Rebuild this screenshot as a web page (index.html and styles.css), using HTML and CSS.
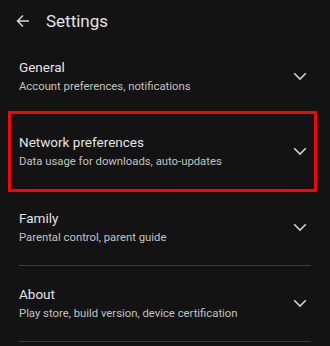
FILE: index.html
```html
<!DOCTYPE html>
<html>
<head>
<meta charset="utf-8">
<link rel="stylesheet" href="styles.css">
</head>
<body>
<div class="screen">
  <header class="topbar">
    <svg class="back" width="14" height="14" viewBox="0 0 14 14"><path d="M13 7H2M7 1.5L1.5 7L7 12.5" fill="none" stroke="#d6d6d6" stroke-width="1.5"/></svg>
    <span class="title">Settings</span>
  </header>
  <div class="list">
    <div class="item">
      <div class="text"><div class="name">General</div><div class="desc">Account preferences, notifications</div></div>
      <svg class="chev" width="14" height="9" viewBox="0 0 14 9"><path d="M1.2 1.2L7 7L12.8 1.2" fill="none" stroke="#cfcfcf" stroke-width="1.6"/></svg>
    </div>
    <div class="item highlight">
      <div class="text"><div class="name">Network preferences</div><div class="desc">Data usage for downloads, auto-updates</div></div>
      <svg class="chev" width="14" height="9" viewBox="0 0 14 9"><path d="M1.2 1.2L7 7L12.8 1.2" fill="none" stroke="#cfcfcf" stroke-width="1.6"/></svg>
    </div>
    <div class="item">
      <div class="text"><div class="name">Family</div><div class="desc">Parental control, parent guide</div></div>
      <svg class="chev" width="14" height="9" viewBox="0 0 14 9"><path d="M1.2 1.2L7 7L12.8 1.2" fill="none" stroke="#cfcfcf" stroke-width="1.6"/></svg>
    </div>
    <div class="item">
      <div class="text"><div class="name">About</div><div class="desc">Play store, build version, device certification</div></div>
      <svg class="chev" width="14" height="9" viewBox="0 0 14 9"><path d="M1.2 1.2L7 7L12.8 1.2" fill="none" stroke="#cfcfcf" stroke-width="1.6"/></svg>
    </div>
  </div>
</div>
</body>
</html>
```
FILE: styles.css
```css
html, body {
  margin: 0;
  padding: 0;
  background: #131313;
}
.screen {
  width: 330px;
  height: 346px;
  overflow: hidden;
  font-family: Roboto, "Noto Sans", sans-serif;
  background: #131313;
}
.topbar {
  height: 39px;
  display: flex;
  align-items: center;
  padding-left: 16px;
  padding-top: 2px;
  box-sizing: border-box;
}
.back {
  display: block;
}
.title {
  margin-left: 16px;
  font-size: 17px;
  color: #e3e3e3;
}
.list {
  padding: 0 19px;
}
.item {
  position: relative;
  height: 75px;
  border-bottom: 1px solid #3a3a3a;
  display: flex;
  align-items: center;
  justify-content: space-between;
}
.item:first-child {
  height: 74px;
}
.name {
  font-size: 13.5px;
  color: #e3e3e3;
  line-height: 18px;
}
.desc {
  font-size: 11.3px;
  color: #c2c2c2;
  line-height: 16px;
  margin-top: 3px;
}
.chev {
  display: block;
  margin-right: 4px;
}
.highlight::after {
  content: "";
  position: absolute;
  left: -11px;
  right: -6px;
  top: -3px;
  bottom: -3px;
  border: 3px solid #ff0000;
}
```
